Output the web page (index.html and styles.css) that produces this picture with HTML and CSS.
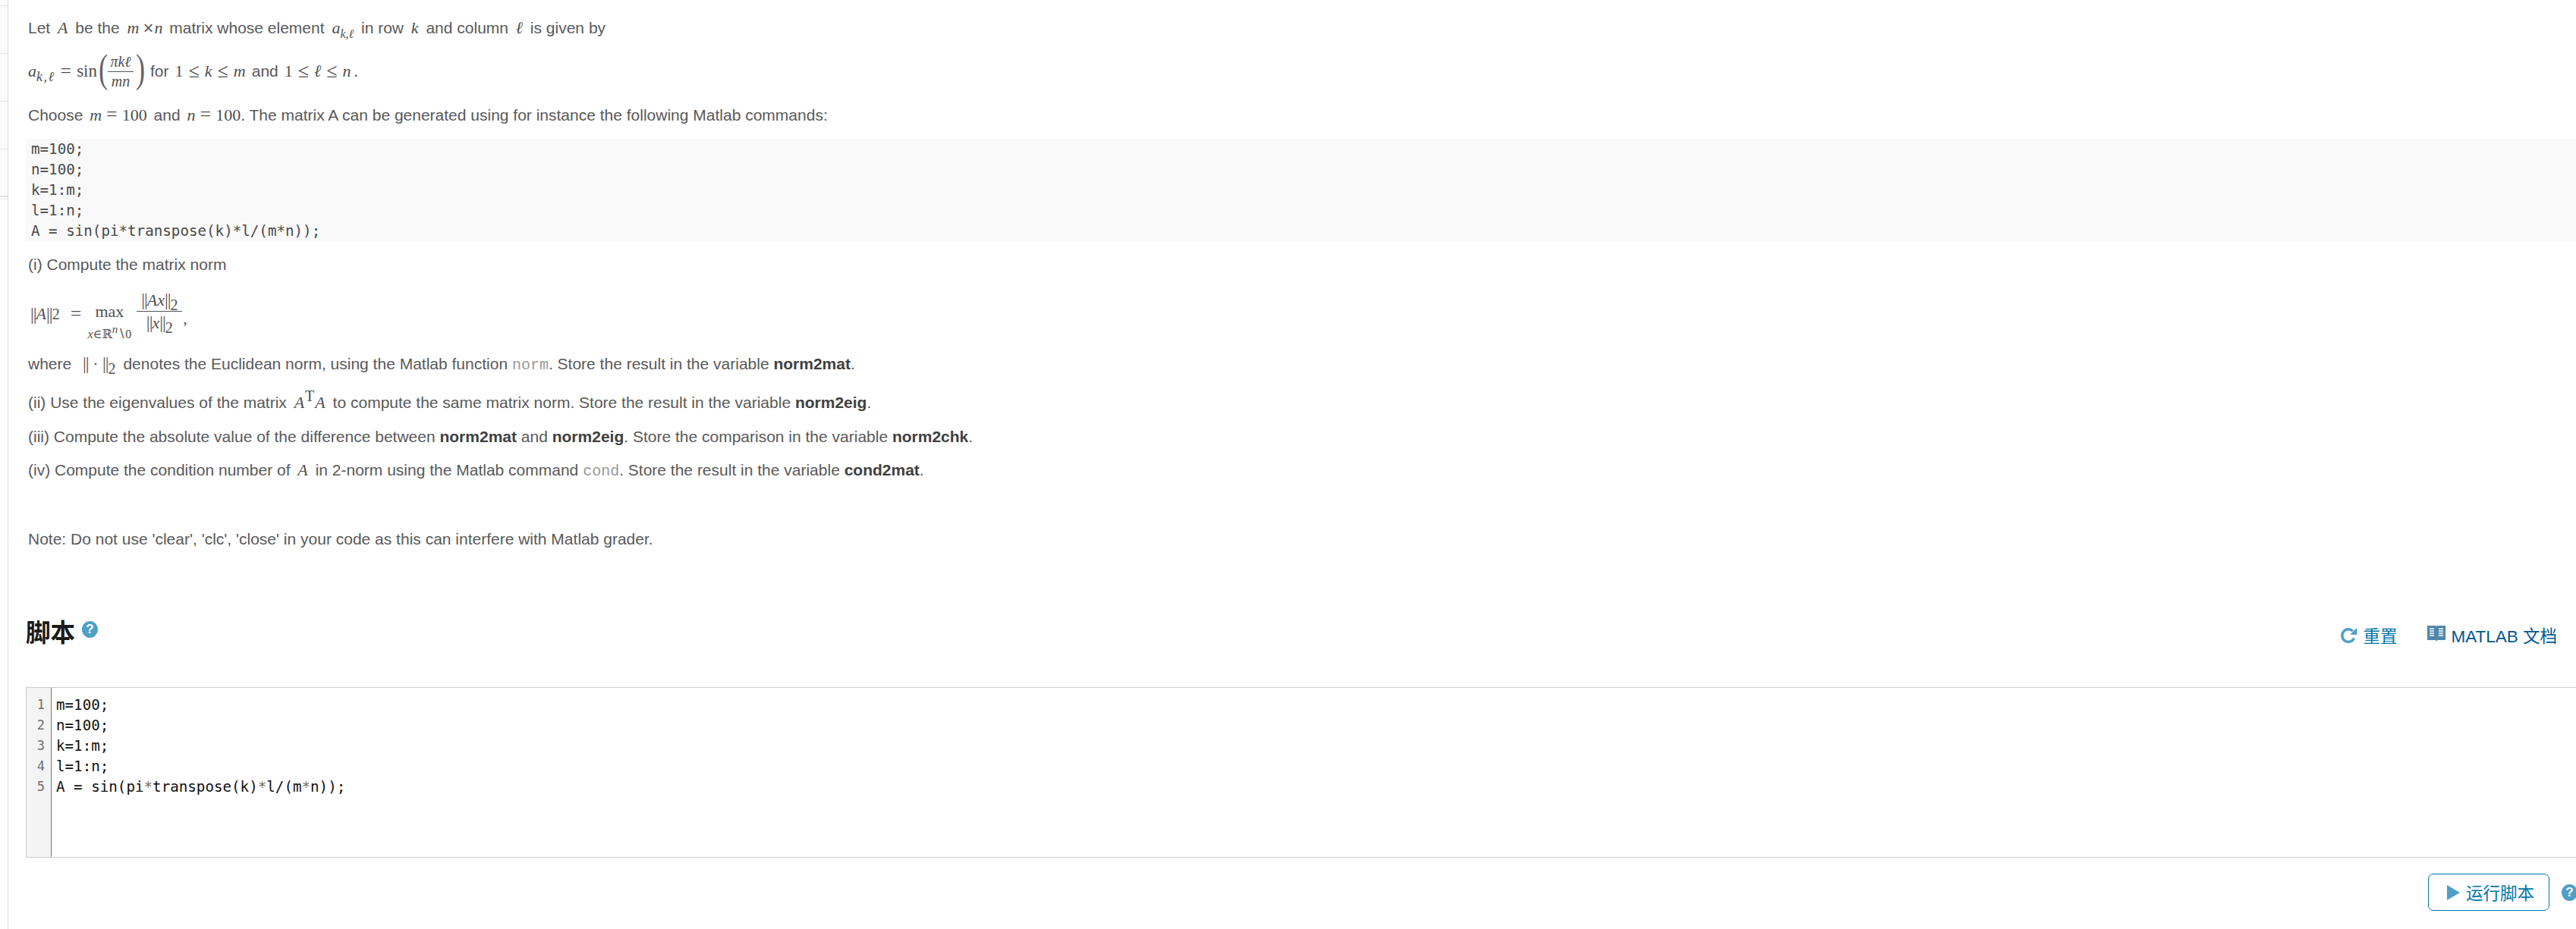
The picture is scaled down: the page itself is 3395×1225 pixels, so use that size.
FILE: index.html
```html
<!DOCTYPE html>
<html lang="en">
<head>
<meta charset="utf-8">
<title>Matrix norm problem</title>
<link rel="stylesheet" href="styles.css">
</head>
<body>
<div class="page">
  <aside class="rail">
    <div class="rail-row r1"></div>
    <div class="rail-row r2"></div>
    <div class="rail-row r2"></div>
    <div class="rail-row r2"></div>
    <div class="rail-row r3"></div>
    <div class="rail-row r4"></div>
  </aside>
  <main class="main">
    <section class="desc">
      <p class="line l1">Let <span class="m gap">A</span> be the <span class="m gap">m</span><span class="times">×</span><span class="m gapr">n</span> matrix whose element <span class="m gap">a<sub class="sub">k,ℓ</sub></span> in row <span class="m gap">k</span> and column <span class="m gap">ℓ</span> is given by</p>
      <div class="line eq1">
        <span class="m">a<sub class="sub sub-wide">k,ℓ</sub></span><span class="up rel">=</span><span class="up sin">sin</span>
        <span class="paren pl">(</span>
        <span class="frac frac1"><span class="num m">πkℓ</span><span class="den m">mn</span></span>
        <span class="paren pr">)</span>
        <span class="txt">for</span><span class="up">1</span><span class="up rel">≤</span><span class="m">k</span><span class="up rel">≤</span><span class="m">m</span>
        <span class="txt">and</span><span class="up">1</span><span class="up rel">≤</span><span class="m">ℓ</span><span class="up rel">≤</span><span class="m">n</span><span class="up dot">.</span>
      </div>
      <p class="line l3">Choose <span class="m gapl">m</span><span class="up rel">=</span><span class="up gapr">100</span> and <span class="m gapl">n</span><span class="up rel">=</span><span class="up">100</span>. The matrix A can be generated using for instance the following Matlab commands:</p>
      <pre class="snippet">m=100;
n=100;
k=1:m;
l=1:n;
A = sin(pi*transpose(k)*l/(m*n));</pre>
      <p class="line l4">(i) Compute the matrix norm</p>
      <div class="eq2">
        <span class="bar">||</span><span class="m">A</span><span class="bar">||</span><sub class="sub2 up">2</sub><span class="up rel rel2">=</span>
        <span class="maxop"><span class="up">max</span><span class="lim"><span class="m">x</span><span class="up">∈ℝ</span><sup class="m limsup">n</sup><span class="up">∖0</span></span></span>
        <span class="frac frac2"><span class="num"><span class="bar">||</span><span class="m">Ax</span><span class="bar">||</span><sub class="sub2 up">2</sub></span><span class="den"><span class="bar">||</span><span class="m">x</span><span class="bar">||</span><sub class="sub2 up">2</sub></span></span><span class="up comma">,</span>
      </div>
      <p class="line l5">where <span class="normsym"><span class="bar">||</span><span class="up"> · </span><span class="bar">||</span><sub class="sub2 up">2</sub></span> denotes the Euclidean norm, using the Matlab function <code class="fn">norm</code>. Store the result in the variable <b class="strong">norm2mat</b>.</p>
      <p class="line l6">(ii) Use the eigenvalues of the matrix <span class="m gap">A<sup class="supT up">T</sup>A</span> to compute the same matrix norm. Store the result in the variable <b class="strong">norm2eig</b>.</p>
      <p class="line l7">(iii) Compute the absolute value of the difference between <b class="strong">norm2mat</b> and <b class="strong">norm2eig</b>. Store the comparison in the variable <b class="strong">norm2chk</b>.</p>
      <p class="line l7b">(iv) Compute the condition number of <span class="m gap">A</span> in 2-norm using the Matlab command <code class="fn">cond</code>. Store the result in the variable <b class="strong">cond2mat</b>.</p>
      <p class="line l8">Note: Do not use 'clear', 'clc', 'close' in your code as this can interfere with Matlab grader.</p>
    </section>

    <header class="script-head">
      <div class="title-wrap">
        <h2 class="title">脚本</h2>
        <span class="help">?</span>
      </div>
      <div class="tools">
        <a class="tool reset">
          <svg class="ico-reset" viewBox="0 0 24 24" aria-hidden="true"><path d="M19.4 15.5A8.6 8.6 0 1 1 17.6 6" fill="none" stroke="#4f9fc6" stroke-width="3.6"/><path d="M14 10.6 23.4 11 23 1.4Z" fill="#4f9fc6"/></svg>
          重置
        </a>
        <a class="tool docs">
          <svg class="ico-book" viewBox="0 0 24 22" aria-hidden="true"><path d="M0 1h11l1 1 1-1h11v19H13l-1 2-1-2H0Z" fill="#4f86ad"/><path d="M3 5h6M3 8h6M3 11h6M3 14h6M15 5h6M15 8h6M15 11h6M15 14h6" stroke="#fff" stroke-width="1.4"/></svg>
          MATLAB 文档
        </a>
      </div>
    </header>

    <div class="editor">
      <div class="gutter"><div>1</div><div>2</div><div>3</div><div>4</div><div>5</div></div>
      <pre class="code">m=100;
n=100;
k=1:m;
l=1:n;
A = sin(pi<span class="op">*</span>transpose(k)<span class="op">*</span>l/(m<span class="op">*</span>n));</pre>
    </div>

    <footer class="actions">
      <button class="run" type="button"><svg class="ico-play" viewBox="0 0 17 20" aria-hidden="true"><path d="M0 0 17 10 0 20Z" fill="#4f9fc6"/></svg>运行脚本</button>
      <span class="help help-run">?</span>
    </footer>
  </main>
</div>
</body>
</html>
```
FILE: styles.css
```css
* { box-sizing: border-box; }
html, body { margin: 0; padding: 0; height: 100%; overflow: hidden; background: #fff; }
body { font-family: "Liberation Sans", Arial, "Noto Sans CJK SC", sans-serif; font-size: 21px; color: #595959; }

.page { display: flex; width: 3395px; height: 1225px; overflow: hidden; }

.rail { flex: 0 0 11px; border-right: 1px solid #dcdcdc; display: flex; flex-direction: column; }
.rail-row { background: #fafafa; border-bottom: 1px solid #e6e6e6; }
.rail .r1 { height: 8px; background: #fff; }
.rail .r2 { height: 63px; }
.rail .r3 { height: 63px; border-bottom: 2px solid #e0e0e0; }
.rail .r4 { height: 3px; background: #fff; border-bottom: 1px solid #e6e6e6; }

.main { flex: 1 1 auto; min-width: 0; padding-left: 23px; }
.desc { padding-left: 3px; padding-top: 22px; }

.line { margin: 0; height: 30px; line-height: 30px; white-space: nowrap; }
.l3 { margin-top: 11px; }
.l4 { margin-top: 16px; }
.l5 { margin-top: 20px; }
.l6 { margin-top: 21px; }
.l7 { margin-top: 15px; }
.l7b { margin-top: 14px; }
.l8 { margin-top: 61px; }

.m { font-family: "Liberation Serif", "DejaVu Serif", serif; font-style: italic; font-size: 22px; color: #4f4f4f; }
.up { font-family: "Liberation Serif", "DejaVu Serif", serif; font-style: normal; font-size: 22px; color: #4f4f4f; }
.bar { font-family: "Liberation Serif", serif; font-size: 24px; line-height: 1; letter-spacing: -1px; color: #4f4f4f; }
.gap { margin: 0 4px; }
.gapl { margin-left: 3px; }
.gapr { margin-right: 3px; }
.times { margin: 0 1px; font-size: 24px; line-height: 1; vertical-align: -1px; }
.rel { margin: 0 6px; font-size: 26px; line-height: 1; }
.sub { font-size: 16px; line-height: 0; vertical-align: -6px; }
.sub-wide { font-size: 18px; letter-spacing: 1.5px; }
.sub2 { font-size: 20px; line-height: 0; vertical-align: -6px; }
.supT { font-size: 20px; line-height: 0; vertical-align: 9px; margin: 0 1px; }
.txt { margin: 0 8px; }

.eq1 { margin-top: 10px; height: 64px; display: flex; align-items: center; gap: 0; white-space: pre; }
.eq1 > .m, .eq1 > .up { display: inline-block; }
.eq1 > .rel { margin: 0 7px; }
.eq1 .sin { font-size: 23px; }
.eq1 .dot { margin-left: 4px; }
.paren { font-family: "Liberation Serif", serif; font-weight: 400; font-size: 52px; line-height: 60px; color: #666; transform: scaleX(.7); width: 13px; text-align: center; margin-top: -6px; }
.frac { display: inline-flex; flex-direction: column; align-items: center; }
.frac .num { border-bottom: 1px solid #555; width: 100%; text-align: center; }
.frac .den { text-align: center; }
.frac1 { width: 34px; margin: 0 1px; }
.frac1 .num, .frac1 .den { font-size: 20px; line-height: 25px; }

.snippet { margin: 16px 0 0 -3px; height: 135px; padding: 0 0 0 7px; background: #f9f9f9; font-family: "DejaVu Sans Mono", monospace; font-size: 19.2px; line-height: 27px; color: #4a4a4a; }

.eq2 { margin-top: 18px; height: 63px; display: flex; align-items: center; padding-left: 3px; white-space: pre; }
.eq2 .rel2 { margin: 0 4px 0 14px; }
.maxop { display: inline-flex; flex-direction: column; align-items: center; width: 64px; margin: 26px 4px 0 1px; line-height: 22px; }
.lim { font-size: 15px; height: 24px; margin-top: 8px; white-space: nowrap; }
.lim .m, .lim .up { font-size: 16px; }
.limsup { font-size: 15px !important; line-height: 0; vertical-align: 7px; }
.frac2 { width: 60px; margin-top: -5px; }
.frac2 .num { height: 28px; line-height: 26px; }
.frac2 .den { height: 28px; line-height: 30px; }
.comma { align-self: center; margin: 12px 0 0 1px; }

.normsym { margin: 0 4px 0 9px; }
.fn { font-family: "Liberation Mono", monospace; font-size: 20px; color: #999; }
.strong { font-weight: 700; color: #404040; }

.script-head { margin-top: 83px; height: 46px; display: flex; align-items: center; justify-content: space-between; padding-right: 25px; }
.title-wrap { display: flex; align-items: center; gap: 9px; }
.title { margin: 0; font-family: "Noto Sans CJK SC", "Liberation Sans", sans-serif; font-weight: 700; font-size: 32.5px; line-height: 46px; color: #1a1a1a; }
.help { flex: none; display: inline-block; width: 21px; height: 22px; border-radius: 50%; background: #4f9fc6; color: #fff; font-family: "Liberation Sans", sans-serif; font-weight: 700; font-size: 17px; line-height: 22px; text-align: center; margin-top: -5px; }

.tools { display: flex; align-items: center; gap: 40px; font-family: "Liberation Sans", "Noto Sans CJK SC", sans-serif; font-size: 22.5px; }
.tool { display: inline-flex; align-items: center; gap: 7px; white-space: nowrap; margin-top: 9px; }
.reset { color: #0076a8; }
.docs { color: #00578f; }
.ico-reset { width: 23px; height: 24px; margin-top: 3px; }
.ico-book { width: 24px; height: 22px; margin-top: -3px; }

.editor { margin-top: 51px; height: 225px; display: flex; border: 1px solid #cccccc; border-right: 0; background: #fff; }
.gutter { flex: 0 0 33px; background: #f4f4f4; border-right: 1px solid #777; padding: 9px 8px 0 0; text-align: right; font-family: "DejaVu Sans Mono", monospace; font-size: 17px; line-height: 27px; color: #6f6f6f; }
.code { margin: 0; padding: 9px 0 0 6px; font-family: "DejaVu Sans Mono", monospace; font-size: 19.2px; line-height: 27px; color: #111; }
.op { color: #7a6a55; }

.actions { display: flex; align-items: center; justify-content: flex-end; gap: 16px; height: 49px; margin-top: 21px; margin-right: -2px; }
.run { width: 160px; height: 49px; display: inline-flex; align-items: center; padding: 0 0 0 24px; gap: 8px; background: #fff; border: 1px solid #0076a8; border-radius: 7px; color: #0076a8; font-family: "Noto Sans CJK SC", "Liberation Sans", sans-serif; font-size: 22.5px; line-height: 1; }
.ico-play { width: 17px; height: 20px; }
.help-run { margin-top: 0; }
```
